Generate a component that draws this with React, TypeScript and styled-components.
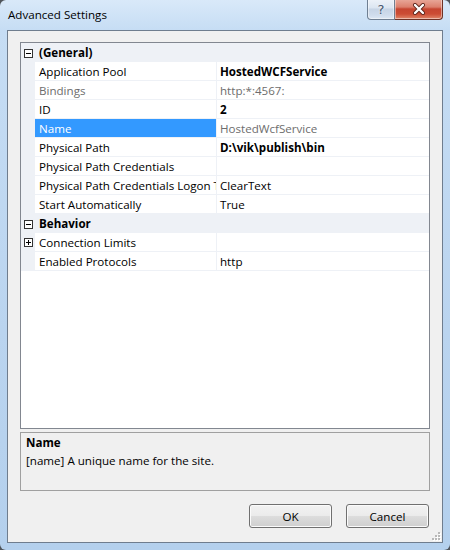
import React from "react";
import styled, { createGlobalStyle } from "styled-components";

const LINE = "#eef1f6";

const GlobalStyle = createGlobalStyle`
  html, body {
    margin: 0;
    padding: 0;
    background: #50555b;
  }
  body {
    font-family: "Open Sans", "Noto Sans", sans-serif;
    font-size: 11.6px;
    color: #000;
  }
`;

const Window = styled.div`
  width: 450px;
  height: 550px;
  border-radius: 6px;
  overflow: hidden;
  display: flex;
  flex-direction: column;
  background: linear-gradient(
    to bottom,
    #d9e9f9 0px,
    #c6ddf4 30px,
    #bad4ef 60%,
    #b4d0ed 100%
  );
`;

const TitleBar = styled.div`
  height: 30px;
  flex: none;
  display: flex;
  align-items: flex-start;
  padding-left: 8px;
  padding-right: 7px;
`;

const Title = styled.div`
  line-height: 30px;
  flex: 1;
`;

const Controls = styled.div`
  display: flex;
  margin-top: -1px;
`;

const CaptionButton = styled.div<{ $close?: boolean }>`
  height: 21px;
  box-sizing: border-box;
  display: flex;
  align-items: center;
  justify-content: center;
  border: 1px solid ${(p) => (p.$close ? "#6e3226" : "#6f7f92")};
  border-top: none;
  width: ${(p) => (p.$close ? "48px" : "28px")};
  border-radius: ${(p) => (p.$close ? "0 0 4px 0" : "0 0 0 4px")};
  ${(p) => (p.$close ? "border-left: none;" : "")}
  background: ${(p) =>
    p.$close
      ? "linear-gradient(to bottom, #e9aa9c 0%, #dc806d 40%, #c64530 50%, #cc4d34 75%, #e0876a 100%)"
      : "linear-gradient(to bottom, #eef3f9 0%, #dbe5f1 45%, #c6d4e5 50%, #cfdcec 80%, #dde8f4 100%)"};
  box-shadow: inset 0 0 0 1px rgba(255, 255, 255, 0.45);
`;

const HelpGlyph = styled.span`
  font-family: "DejaVu Sans", sans-serif;
  font-size: 13px;
  color: #44556d;
  text-shadow: 0 0 2px #fff;
  line-height: 1;
`;

const Client = styled.div`
  flex: 1;
  margin: 0 7px 7px;
  border: 1px solid #6f7d8e;
  background: #f0f0f0;
  display: flex;
  flex-direction: column;
  padding: 11px 12px 14px;
  position: relative;
`;

const Grid = styled.div`
  height: 387px;
  flex: none;
  box-sizing: border-box;
  border: 1px solid #828790;
  background: #fff;
  overflow: hidden;
`;

const Row = styled.div`
  display: grid;
  grid-template-columns: 14px 182px 1fr;
  height: 19px;
  line-height: 20px;
`;

const CategoryRow = styled.div`
  display: grid;
  grid-template-columns: 14px 1fr;
  height: 19px;
  line-height: 20px;
  background: ${LINE};
  font-weight: bold;
  overflow: hidden;
`;

const Gutter = styled.div`
  background: ${LINE};
  display: flex;
  align-items: center;
  justify-content: center;
  padding-left: 1px;
`;

const CategoryLabel = styled.div`
  padding-left: 4px;
`;

const LabelCell = styled.div<{ $selected?: boolean; $dim?: boolean }>`
  box-sizing: border-box;
  border-right: 1px solid ${LINE};
  border-bottom: 1px solid ${LINE};
  padding-left: 4px;
  white-space: nowrap;
  overflow: hidden;
  background: ${(p) => (p.$selected ? "#3399ff" : "#fff")};
  color: ${(p) => (p.$selected ? "#fff" : p.$dim ? "#6d6d6d" : "#000")};
`;

const ValueCell = styled.div<{ $bold?: boolean; $dim?: boolean }>`
  border-bottom: 1px solid ${LINE};
  padding-left: 3px;
  white-space: nowrap;
  overflow: hidden;
  font-weight: ${(p) => (p.$bold ? "bold" : "normal")};
  color: ${(p) => (p.$dim ? "#6d6d6d" : "#000")};
`;

const Description = styled.div`
  margin-top: 3px;
  height: 59px;
  flex: none;
  box-sizing: border-box;
  border: 1px solid #a0a0a0;
  padding: 1px 5px;
  line-height: 18px;
`;

const DescTitle = styled.div`
  font-weight: bold;
`;

const ButtonRow = styled.div`
  margin-top: 13px;
  margin-right: 1px;
  display: flex;
  justify-content: flex-end;
  gap: 14px;
`;

const Button = styled.button`
  width: 83px;
  height: 24px;
  border: 1px solid #707070;
  border-radius: 3px;
  font: inherit;
  color: #000;
  padding: 0;
  background: linear-gradient(
    to bottom,
    #f2f2f2 0%,
    #ebebeb 50%,
    #dddddd 50%,
    #cfcfcf 100%
  );
  box-shadow: inset 0 0 0 1px #fbfbfb;
`;

const Grip = styled.svg`
  position: absolute;
  right: 1px;
  bottom: 1px;
`;

const Expander = ({ open }: { open: boolean }) => (
  <svg width="9" height="9" viewBox="0 0 9 9">
    <rect x="0.5" y="0.5" width="8" height="8" fill="#fff" stroke="#333" />
    <line x1="2" y1="4.5" x2="7" y2="4.5" stroke="#000" />
    {!open && <line x1="4.5" y1="2" x2="4.5" y2="7" stroke="#000" />}
  </svg>
);

type Prop = {
  label: string;
  value?: string;
  bold?: boolean;
  dim?: boolean;
  selected?: boolean;
  expandable?: boolean;
};

type Section = { name: string; props: Prop[] };

const sections: Section[] = [
  {
    name: "(General)",
    props: [
      { label: "Application Pool", value: "HostedWCFService", bold: true },
      { label: "Bindings", value: "http:*:4567:", dim: true },
      { label: "ID", value: "2", bold: true },
      { label: "Name", value: "HostedWcfService", selected: true },
      { label: "Physical Path", value: "D:\\vik\\publish\\bin", bold: true },
      { label: "Physical Path Credentials" },
      { label: "Physical Path Credentials Logon Type", value: "ClearText" },
      { label: "Start Automatically", value: "True" },
    ],
  },
  {
    name: "Behavior",
    props: [
      { label: "Connection Limits", expandable: true },
      { label: "Enabled Protocols", value: "http" },
    ],
  },
];

export default function App() {
  return (
    <>
      <GlobalStyle />
      <Window>
        <TitleBar>
          <Title>Advanced Settings</Title>
          <Controls>
            <CaptionButton>
              <HelpGlyph>?</HelpGlyph>
            </CaptionButton>
            <CaptionButton $close>
              <svg width="14" height="12" viewBox="0 0 14 12">
                <path
                  d="M3 2 L11 10 M11 2 L3 10"
                  stroke="#5a2219"
                  strokeWidth="4"
                  strokeLinecap="round"
                />
                <path
                  d="M3 2 L11 10 M11 2 L3 10"
                  stroke="#fff"
                  strokeWidth="2.4"
                  strokeLinecap="round"
                />
              </svg>
            </CaptionButton>
          </Controls>
        </TitleBar>
        <Client>
          <Grid>
            {sections.map((s) => (
              <React.Fragment key={s.name}>
                <CategoryRow>
                  <Gutter>
                    <Expander open />
                  </Gutter>
                  <CategoryLabel>{s.name}</CategoryLabel>
                </CategoryRow>
                {s.props.map((p) => (
                  <Row key={p.label}>
                    <Gutter>{p.expandable && <Expander open={false} />}</Gutter>
                    <LabelCell $selected={p.selected} $dim={p.dim}>
                      {p.label}
                    </LabelCell>
                    <ValueCell
                      $bold={p.bold}
                      $dim={p.dim || p.selected}
                    >
                      {p.value}
                    </ValueCell>
                  </Row>
                ))}
              </React.Fragment>
            ))}
          </Grid>
          <Description>
            <DescTitle>Name</DescTitle>
            <div>[name] A unique name for the site.</div>
          </Description>
          <ButtonRow>
            <Button>OK</Button>
            <Button>Cancel</Button>
          </ButtonRow>
          <Grip width="10" height="10" viewBox="0 0 10 10">
            {[
              [7, 1],
              [4, 4],
              [7, 4],
              [1, 7],
              [4, 7],
              [7, 7],
            ].map(([x, y]) => (
              <React.Fragment key={`${x}-${y}`}>
                <rect x={x + 1} y={y + 1} width="2" height="2" fill="#fff" />
                <rect x={x} y={y} width="2" height="2" fill="#b8b8b8" />
              </React.Fragment>
            ))}
          </Grip>
        </Client>
      </Window>
    </>
  );
}
